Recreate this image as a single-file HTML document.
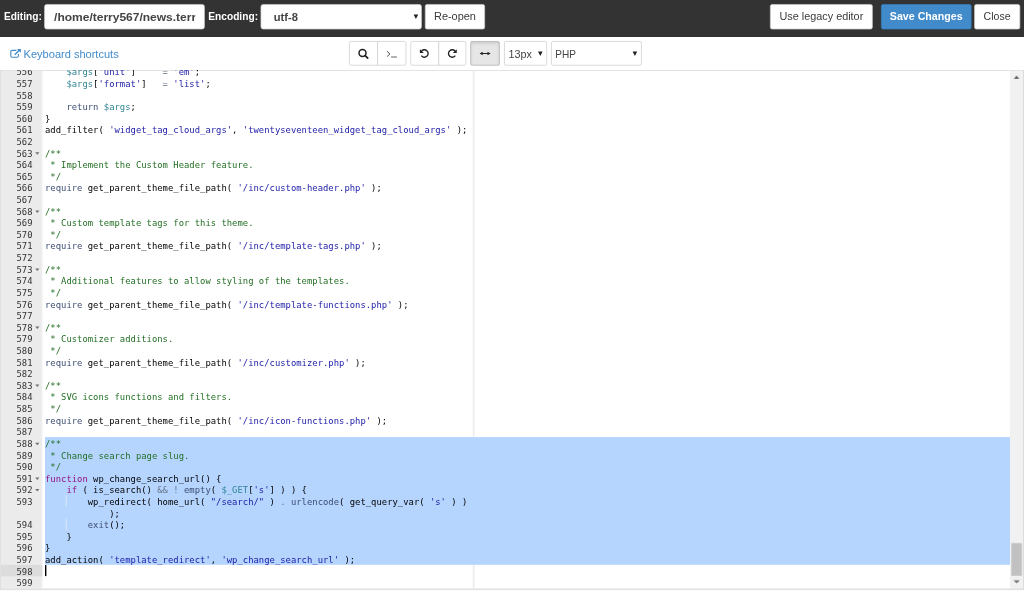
<!DOCTYPE html>
<html><head><meta charset="utf-8"><title>cPanel File Manager</title>
<style>
*{box-sizing:border-box}
html,body{margin:0;padding:0;width:1024px;height:604px;overflow:hidden;background:#fff;font-family:"Liberation Sans",sans-serif;font-size:100px;color:#333}
#top{will-change:transform;position:absolute;left:0;top:0;width:10240px;height:366px;background:#333}
.lbl{position:absolute;color:#fff;font-weight:bold;font-size:102px;top:0;line-height:330px}
.inp{position:absolute;background:#fff;border:7px solid #ccc;border-radius:26px;height:253px;top:41px;font-size:109px;line-height:240px;color:#444;white-space:nowrap;overflow:hidden;font-weight:bold}
.it{position:absolute;left:92px;top:5px;width:1284px;overflow:hidden;white-space:nowrap;transform:scaleX(1.10);transform-origin:0 50%}
.x{display:inline-block;transform-origin:0 50%}
.btn{position:absolute;background:#fff;border:7px solid #ccc;border-radius:22px;height:253px;top:41px;font-size:103px;line-height:234px;color:#3a3a3a;text-align:center;white-space:nowrap}
.btn span{display:inline-block}
.btn.pri{background:#428bca;border-color:#357ebd;color:#fff;font-weight:bold}
.arr{position:absolute;width:0;height:0;border-left:23px solid transparent;border-right:23px solid transparent;border-top:46px solid #222}
#bar{will-change:transform;position:absolute;left:0;top:366px;width:10240px;height:342px;background:#fff;border-bottom:8px solid #dcdcdc}
.tb{position:absolute;top:45px;height:245px;background:#fff;border:7px solid #ccc;font-size:104px;line-height:234px;color:#444;white-space:nowrap}
.tb.act{background:#e6e6e6;border-color:#adadad;box-shadow:inset 0 15px 30px rgba(0,0,0,.13)}
.st{position:absolute;top:4px;display:inline-block;transform-origin:0 50%}
#ic{position:absolute;left:0;top:0}
.kb{position:absolute;left:236px;top:5px;line-height:340px;color:#428bca;font-size:104px;display:inline-block;transform:scaleX(1.061);transform-origin:0 50%;white-space:nowrap}
#ed{position:absolute;left:7px;top:708px;width:10223px;height:5178px;overflow:hidden;background:#fff}
#edb{position:absolute;left:0;top:5885px;width:10240px;height:16px;background:#e0e0e0}
#gut{position:absolute;left:0;top:0;width:415px;height:5180px;background:#ebebeb}
#code{will-change:transform;position:absolute;left:0;top:0;width:10100px;height:5180px;font-family:"DejaVu Sans Mono","Liberation Mono",monospace;font-size:88.8px;line-height:116px;white-space:pre;color:#000}
.r{position:absolute;left:0;height:116px;width:10100px}
.n{position:absolute;left:0;top:10px;width:318px;text-align:right;color:#333}
.f{position:absolute;left:345px;top:56px;width:0;height:0;border-left:21px solid transparent;border-right:21px solid transparent;border-top:25px solid #707070}
.al{position:absolute;left:0;top:0;width:415px;height:116px;background:#dcdcdc}
.t{position:absolute;left:443px;top:10px}
.g{position:absolute;left:206px;top:-10px;width:14px;height:116px;background:#d0e3fa}
#sel{position:absolute;left:443px;width:9652px;background:#b5d5ff}
#cur{position:absolute;left:443px;width:14px;height:110px;background:#000}
.c{color:#236e24}.s{color:#1a1aa6}.k{color:#930f80}.v{color:#318495}.o{color:#687687}.fn{color:#3c4c72}
#edl{position:absolute;left:0;top:701px;width:7.5px;height:5196px;background:#d9d9d9}
#edr{position:absolute;left:10230px;top:701px;width:10px;height:5196px;background:#dcdcdc}
#pm{position:absolute;left:4724.5px;top:0;width:9px;height:5180px;background:#dcdcdc}
#sb{position:absolute;left:10095px;top:0;width:128px;height:5180px;background:#f1f1f1}
#th{position:absolute;left:11px;top:4723px;width:106px;height:327px;background:#c1c1c1}
.sa{position:absolute;left:36px;width:0;height:0;border-left:28px solid transparent;border-right:28px solid transparent}
#w{position:absolute;left:0;top:0;width:10240px;height:6040px;transform:scale(.1);transform-origin:0 0;overflow:hidden}
</style></head><body><div id="w">
<div id="top">
<span class="lbl" style="left:40px"><b class="x" style="transform:scaleX(1.0)">Editing:</b></span>
<div class="inp" style="left:442px;width:1606px"><span class="it">/home/terry567/news.terry567.com/functions.php</span></div>
<span class="lbl" style="left:2082px"><b class="x" style="transform:scaleX(1.0)">Encoding:</b></span>
<div class="inp" style="left:2606px;width:1612px"><span class="it" style="left:124px;width:600px;transform:scaleX(1.03)">utf-8</span><span class="arr" style="left:1523px;top:97px"></span></div>
<div class="btn" style="left:4249px;width:601px"><span style="transform:scaleX(1.06)">Re-open</span></div>
<div class="btn" style="left:7700px;width:1027px"><span style="transform:scaleX(1.052)">Use legacy editor</span></div>
<div class="btn pri" style="left:8810px;width:905px"><span style="transform:scaleX(1.032)">Save Changes</span></div>
<div class="btn" style="left:9742px;width:460px"><span style="transform:scaleX(1.03)">Close</span></div>
</div>
<div id="bar">
<span class="kb">Keyboard shortcuts</span>
<div class="tb" style="left:3491px;width:288px;border-radius:18px 0 0 18px"></div>
<div class="tb" style="left:3772px;width:291px;border-radius:0 18px 18px 0"></div>
<div class="tb" style="left:4104px;width:287px;border-radius:18px 0 0 18px"></div>
<div class="tb" style="left:4384px;width:278px;border-radius:0 18px 18px 0"></div>
<div class="tb act" style="left:4703px;width:295px;border-radius:18px"></div>
<div class="tb" style="left:5041px;width:429px;border-radius:18px"><span class="st" style="left:36px;transform:scaleX(1.04)">13px</span><span class="arr" style="left:332px;top:96px"></span></div>
<div class="tb" style="left:5511px;width:907px;border-radius:18px"><span class="st" style="left:34px;transform:scaleX(0.97)">PHP</span><span class="arr" style="left:808px;top:96px"></span></div>
<svg id="ic" viewBox="0 36.6 1024 34.2" width="10240" height="342">
<g fill="none" stroke="#428bca" stroke-width="1.1"><path d="M16.4 50.4H12a1.2 1.2 0 0 0-1.2 1.2V56a1.2 1.2 0 0 0 1.2 1.2h5.2a1.2 1.2 0 0 0 1.2-1.2V54"/><path d="M14.7 54.7L19.6 49.9" stroke-width="1.4"/></g>
<path d="M17 48.9h3.9v3.9z" fill="#428bca"/>
<g fill="none" stroke="#222" stroke-linecap="round"><circle cx="362.5" cy="52.9" r="3.5" stroke-width="1.5"/><path d="M365.2 55.7L367.7 58.2" stroke-width="1.7"/></g>
<g fill="none" stroke="#444"><path d="M387.1 51.3L389.9 53.9L387.1 56.6" stroke-width="0.95"/><path d="M391.1 56.9H396.9" stroke="#666" stroke-width="1.05"/></g>
<g fill="none" stroke="#222" stroke-width="1.35"><path d="M421.3 51.35A3.75 3.75 0 1 1 421.3 55.65"/><path d="M455.3 51.35A3.75 3.75 0 1 0 455.3 55.65"/></g>
<g fill="#222"><path d="M419.9 49.2V53.1H423.8z"/><path d="M456.75 49.2V53.1H452.85z"/>
<path d="M480.5 52.95H489.7V54.05H480.5z"/><path d="M479.6 53.5L482.7 51.8V55.2z"/><path d="M490.6 53.5L487.5 51.8V55.2z"/></g>
</svg>
</div>
<div id="ed">
<div id="gut"></div>
<div id="pm"></div>
<div id="code">
<div id="sel" style="top:3662.6px;height:1277.4px"></div>
<div class="r" style="top:-53.6px"><span class="n">556</span><span class="t">    <span class="v">$args</span>[<span class="s">'unit'</span>]     <span class="o">=</span> <span class="s">'em'</span>;</span></div>
<div class="r" style="top:62.5px"><span class="n">557</span><span class="t">    <span class="v">$args</span>[<span class="s">'format'</span>]   <span class="o">=</span> <span class="s">'list'</span>;</span></div>
<div class="r" style="top:178.7px"><span class="n">558</span><span class="t"></span></div>
<div class="r" style="top:294.8px"><span class="n">559</span><span class="t">    <span class="fn">return</span> <span class="v">$args</span>;</span></div>
<div class="r" style="top:410.9px"><span class="n">560</span><span class="t">}</span></div>
<div class="r" style="top:527.1px"><span class="n">561</span><span class="t">add_filter( <span class="s">'widget_tag_cloud_args'</span>, <span class="s">'twentyseventeen_widget_tag_cloud_args'</span> );</span></div>
<div class="r" style="top:643.2px"><span class="n">562</span><span class="t"></span></div>
<div class="r" style="top:759.3px"><span class="n">563</span><span class="f"></span><span class="t"><span class="c">/**</span></span></div>
<div class="r" style="top:875.5px"><span class="n">564</span><span class="t"><span class="c"> * Implement the Custom Header feature.</span></span></div>
<div class="r" style="top:991.6px"><span class="n">565</span><span class="t"><span class="c"> */</span></span></div>
<div class="r" style="top:1107.7px"><span class="n">566</span><span class="t"><span class="fn">require</span> get_parent_theme_file_path( <span class="s">'/inc/custom-header.php'</span> );</span></div>
<div class="r" style="top:1223.8px"><span class="n">567</span><span class="t"></span></div>
<div class="r" style="top:1340px"><span class="n">568</span><span class="f"></span><span class="t"><span class="c">/**</span></span></div>
<div class="r" style="top:1456.1px"><span class="n">569</span><span class="t"><span class="c"> * Custom template tags for this theme.</span></span></div>
<div class="r" style="top:1572.2px"><span class="n">570</span><span class="t"><span class="c"> */</span></span></div>
<div class="r" style="top:1688.4px"><span class="n">571</span><span class="t"><span class="fn">require</span> get_parent_theme_file_path( <span class="s">'/inc/template-tags.php'</span> );</span></div>
<div class="r" style="top:1804.5px"><span class="n">572</span><span class="t"></span></div>
<div class="r" style="top:1920.6px"><span class="n">573</span><span class="f"></span><span class="t"><span class="c">/**</span></span></div>
<div class="r" style="top:2036.8px"><span class="n">574</span><span class="t"><span class="c"> * Additional features to allow styling of the templates.</span></span></div>
<div class="r" style="top:2152.9px"><span class="n">575</span><span class="t"><span class="c"> */</span></span></div>
<div class="r" style="top:2269px"><span class="n">576</span><span class="t"><span class="fn">require</span> get_parent_theme_file_path( <span class="s">'/inc/template-functions.php'</span> );</span></div>
<div class="r" style="top:2385.1px"><span class="n">577</span><span class="t"></span></div>
<div class="r" style="top:2501.3px"><span class="n">578</span><span class="f"></span><span class="t"><span class="c">/**</span></span></div>
<div class="r" style="top:2617.4px"><span class="n">579</span><span class="t"><span class="c"> * Customizer additions.</span></span></div>
<div class="r" style="top:2733.5px"><span class="n">580</span><span class="t"><span class="c"> */</span></span></div>
<div class="r" style="top:2849.7px"><span class="n">581</span><span class="t"><span class="fn">require</span> get_parent_theme_file_path( <span class="s">'/inc/customizer.php'</span> );</span></div>
<div class="r" style="top:2965.8px"><span class="n">582</span><span class="t"></span></div>
<div class="r" style="top:3081.9px"><span class="n">583</span><span class="f"></span><span class="t"><span class="c">/**</span></span></div>
<div class="r" style="top:3198.1px"><span class="n">584</span><span class="t"><span class="c"> * SVG icons functions and filters.</span></span></div>
<div class="r" style="top:3314.2px"><span class="n">585</span><span class="t"><span class="c"> */</span></span></div>
<div class="r" style="top:3430.3px"><span class="n">586</span><span class="t"><span class="fn">require</span> get_parent_theme_file_path( <span class="s">'/inc/icon-functions.php'</span> );</span></div>
<div class="r" style="top:3546.4px"><span class="n">587</span><span class="t"></span></div>
<div class="r" style="top:3662.6px"><span class="n">588</span><span class="f"></span><span class="t"><span class="c">/**</span></span></div>
<div class="r" style="top:3778.7px"><span class="n">589</span><span class="t"><span class="c"> * Change search page slug.</span></span></div>
<div class="r" style="top:3894.8px"><span class="n">590</span><span class="t"><span class="c"> */</span></span></div>
<div class="r" style="top:4011px"><span class="n">591</span><span class="f"></span><span class="t"><span class="k">function</span> wp_change_search_url() {</span></div>
<div class="r" style="top:4127.1px"><span class="n">592</span><span class="f"></span><span class="t">    <span class="k">if</span> ( is_search() <span class="o">&amp;&amp;</span> <span class="o">!</span> <span class="fn">empty</span>( <span class="v">$_GET</span>[<span class="s">'s'</span>] ) ) {</span></div>
<div class="r" style="top:4243.2px"><span class="n">593</span><span class="t"><i class="g"></i>        wp_redirect( home_url( <span class="s">"/search/"</span> ) <span class="o">.</span> <span class="fn">urlencode</span>( get_query_var( <span class="s">'s'</span> ) )</span></div>
<div class="r" style="top:4359.4px"><span class="t">            );</span></div>
<div class="r" style="top:4475.5px"><span class="n">594</span><span class="t"><i class="g"></i>        <span class="fn">exit</span>();</span></div>
<div class="r" style="top:4591.6px"><span class="n">595</span><span class="t">    }</span></div>
<div class="r" style="top:4707.7px"><span class="n">596</span><span class="t">}</span></div>
<div class="r" style="top:4823.9px"><span class="n">597</span><span class="t">add_action( <span class="s">'template_redirect'</span>, <span class="s">'wp_change_search_url'</span> );</span></div>
<div class="r" style="top:4940px"><span class="al"></span><span class="n">598</span><span class="t"></span></div>
<div class="r" style="top:5056.1px"><span class="n">599</span><span class="t"></span></div>
<div id="cur" style="top:4943px"></div>
</div>
<div id="sb"><div class="sa" style="top:51px;border-bottom:29px solid #585858"></div><div id="th"></div><div class="sa" style="top:5096px;left:34px;border-left-width:31px;border-right-width:31px;border-top:29px solid #757575"></div></div>
</div>
<div id="edb"></div><div id="edl"></div><div id="edr"></div>
</div></body></html>
